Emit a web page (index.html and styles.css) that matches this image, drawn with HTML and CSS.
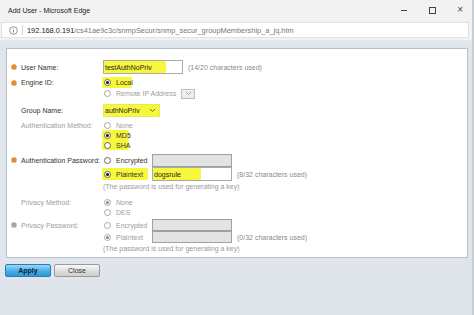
FILE: index.html
```html
<!DOCTYPE html>
<html>
<head>
<meta charset="utf-8">
<link rel="stylesheet" href="styles.css">
</head>
<body>
<div class="window">
  <div class="titlebar">
    <span class="title">Add User - Microsoft Edge</span>
    <div class="winctl">
      <span class="wmin"></span>
      <span class="wmax"></span>
      <span class="wclose">×</span>
    </div>
  </div>
  <div class="addr">
    <div class="addrbox">
      <svg class="info" width="9" height="9" viewBox="0 0 9 9"><circle cx="4.5" cy="4.5" r="3.8" fill="none" stroke="#777" stroke-width="0.8"/><line x1="4.5" y1="4" x2="4.5" y2="6.6" stroke="#777" stroke-width="0.8"/><circle cx="4.5" cy="2.7" r="0.5" fill="#777"/></svg>
      <span class="sep"></span>
      <span class="url"><span class="host">192.168.0.191</span>/cs41ae9c3c/snmpSecur/snmp_secur_groupMembership_a_jq.htm</span>
    </div>
  </div>
  <div class="content">
    <div class="panel">
      <div class="field f-user">
        <div class="lbl"><span class="dot"></span>User Name:</div>
        <div class="opts">
          <div class="line l14">
            <span class="input w80"><span class="hl hl-user">testAuthNoPriv</span></span>
            <span class="count">(14/20 characters used)</span>
          </div>
        </div>
      </div>
      <div class="field f-engine">
        <div class="lbl l11"><span class="dot"></span>Engine ID:</div>
        <div class="opts">
          <div class="line l11"><span class="hlr hl-local"><span class="radio on"></span><span class="rt">Local</span></span></div>
          <div class="line l11 dis"><span class="radio dis"></span><span class="rt">Remote IP Address</span><span class="minisel"><svg width="7" height="5" viewBox="0 0 7 5"><polyline points="1,1 3.5,3.5 6,1" fill="none" stroke="#999" stroke-width="0.9"/></svg></span></div>
        </div>
      </div>
      <div class="field f-group">
        <div class="lbl l14"><span class="nodot"></span>Group Name:</div>
        <div class="opts">
          <div class="line l14"><span class="select hl-sel">authNoPriv<svg width="7" height="5" viewBox="0 0 7 5"><polyline points="1,1 3.5,3.5 6,1" fill="none" stroke="#555" stroke-width="0.9"/></svg></span></div>
        </div>
      </div>
      <div class="field f-method">
        <div class="lbl l10 dis"><span class="nodot"></span>Authentication Method:</div>
        <div class="opts">
          <div class="line l10 dis"><span class="radio dis"></span><span class="rt">None</span></div>
          <div class="line l10"><span class="hlr hl-md5"><span class="radio on"></span><span class="rt">MD5</span></span></div>
          <div class="line l10"><span class="hlr hl-sha"><span class="radio"></span><span class="rt">SHA</span></span></div>
        </div>
      </div>
      <div class="field f-apwd">
        <div class="lbl l14"><span class="dot"></span>Authentication Password:</div>
        <div class="opts">
          <div class="line l14"><span class="radio"></span><span class="rt rw">Encrypted</span><span class="input w80 disin"></span></div>
          <div class="line l14"><span class="hlr hl-plain"><span class="radio on"></span><span class="rt">Plaintext</span></span><span class="input w80 after-hl"><span class="hl hl-dogs">dogsrule</span></span><span class="count">(8/32 characters used)</span></div>
          <div class="line l10 hint">(The password is used for generating a key)</div>
        </div>
      </div>
      <div class="field f-pmethod">
        <div class="lbl l10 dis"><span class="nodot"></span>Privacy Method:</div>
        <div class="opts">
          <div class="line l10 dis"><span class="radio dis on"></span><span class="rt">None</span></div>
          <div class="line l10 dis"><span class="radio dis"></span><span class="rt">DES</span></div>
        </div>
      </div>
      <div class="field f-ppwd">
        <div class="lbl l12 dis"><span class="dot gray"></span>Privacy Password:</div>
        <div class="opts">
          <div class="line l12 dis"><span class="radio dis"></span><span class="rt rw">Encrypted</span><span class="input w80 disin"></span></div>
          <div class="line l12 dis"><span class="radio dis on"></span><span class="rt rw">Plaintext</span><span class="input w80 disin"></span><span class="count">(0/32 characters used)</span></div>
          <div class="line l10 hint">(The password is used for generating a key)</div>
        </div>
      </div>
    </div>
    <div class="buttons">
      <span class="btn apply">Apply</span>
      <span class="btn closeb">Close</span>
    </div>
  </div>
</div>
</body>
</html>
```

FILE: styles.css
```css
* { box-sizing: border-box; }
html, body { margin: 0; padding: 0; }
body {
  width: 474px;
  height: 315px;
  overflow: hidden;
  font-family: "Liberation Sans", Arial, sans-serif;
  background: #dfe5eb;
}
.window {
  width: 474px;
  height: 315px;
  display: flex;
  flex-direction: column;
  background: #dfe5eb;
  border-right: 2px solid #c9ced3;
}
.titlebar {
  height: 20px;
  background: #f2f2f2;
  display: flex;
  align-items: center;
  justify-content: space-between;
  padding-left: 8px;
}
.title {
  font-size: 7px;
  color: #222;
}
.winctl {
  display: flex;
  align-items: center;
  height: 20px;
}
.wmin {
  width: 6px;
  height: 1px;
  background: #444;
  margin-right: 22px;
}
.wmax {
  width: 7px;
  height: 7px;
  border: 1px solid #444;
  margin-right: 21px;
}
.wclose {
  font-size: 10px;
  color: #444;
  margin-right: 9px;
  line-height: 10px;
}
.addr {
  height: 20px;
  background: #f2f2f2;
  padding: 2px 3px 2px 1px;
}
.addrbox {
  height: 16px;
  background: #fff;
  border: 1px solid #e2e2e2;
  display: flex;
  align-items: center;
  padding-left: 7px;
}
.info { display: block; }
.sep {
  width: 1px;
  height: 10px;
  background: #d0d0d0;
  margin: 0 4px 0 4px;
}
.url {
  font-size: 7.4px;
  color: #777;
  white-space: nowrap;
}
.host { color: #222; }
.content {
  flex: 1;
  padding: 7px 4px 0 6px;
  border-top: 1px solid #e6e9ec;
}
.panel {
  width: 462px;
  background: #fff;
  border: 1px solid #b7c0c8;
  padding: 11px 0 4px 5px;
}
.field {
  display: flex;
  font-size: 7px;
  color: #333;
}
.f-engine { margin-top: 3px; }
.f-group { margin-top: 4px; }
.f-method { margin-top: 3px; }
.f-apwd { margin-top: 3px; }
.f-pmethod { margin-top: 6px; }
.f-ppwd { margin-top: 2px; }
.lbl {
  width: 91px;
  height: 14px;
  display: flex;
  align-items: center;
  white-space: nowrap;
}
.lbl.l11 { height: 11px; }
.lbl.l10 { height: 10px; }
.lbl.l12 { height: 12px; }
.dot {
  width: 4px;
  height: 4px;
  border-radius: 1px;
  background: #ea8a2e;
  box-shadow: 0 0 0 0.5px #d0701a;
  margin-right: 5px;
  flex: none;
}
.dot.gray { background: #a8a8a8; box-shadow: 0 0 0 0.5px #909090; }
.nodot { width: 4px; margin-right: 5px; flex: none; }
.dis { color: #9d9d9d; }
.opts {
  display: flex;
  flex-direction: column;
}
.line {
  display: flex;
  align-items: center;
  white-space: nowrap;
}
.l14 { height: 14px; }
.l12 { height: 12px; }
.l11 { height: 11px; }
.l10 { height: 10px; }
.hint { color: #9a9a9a; }
.radio {
  width: 7px;
  height: 7px;
  border-radius: 50%;
  border: 1px solid #666;
  background: #fff;
  margin-left: 1px;
  flex: none;
  display: flex;
  align-items: center;
  justify-content: center;
}
.radio.on::after {
  content: "";
  width: 3px;
  height: 3px;
  border-radius: 50%;
  background: #111;
}
.radio.dis { border-color: #aaa; }
.radio.dis.on::after { background: #888; }
.rt { margin-left: 5px; }
.rw { width: 36px; }
.hlr {
  display: flex;
  align-items: center;
  background: #f7f73c;
  height: 10px;
  border-radius: 2px;
  margin-left: -1px;
  padding-left: 1px;
}
.hl-local { width: 30px; height: 11px; }
.hl-md5 { width: 27px; }
.hl-sha { width: 27px; }
.hl-plain { width: 46px; height: 12px; }
.after-hl { margin-left: 4px; }
.input {
  height: 14px;
  border: 1px solid #a9a9a9;
  background: #fff;
  display: flex;
  align-items: center;
  flex: none;
}
.w80 { width: 80px; }
.disin { background: #e3e3e3; border-color: #a0a0a0; height: 13px; }
.l12 .disin { height: 12px; }
.hl {
  background: #f7f73c;
  height: 12px;
  display: flex;
  align-items: center;
  border-radius: 2px;
  padding-left: 1px;
  color: #222;
}
.hl-user { width: 62px; }
.hl-dogs { width: 48px; }
.count {
  color: #8a8a8a;
  margin-left: 5px;
}
.minisel {
  width: 14px;
  height: 10px;
  border: 1px solid #bdbdbd;
  background: #eee;
  margin-left: 5px;
  display: flex;
  align-items: center;
  justify-content: center;
}
.minisel svg, .select svg { display: block; }
.select {
  width: 57px;
  height: 13px;
  background: #f7f73c;
  border: 1px solid #e8e860;
  display: flex;
  align-items: center;
  justify-content: space-between;
  padding: 0 3px 0 1px;
  color: #222;
}
.buttons {
  display: flex;
  gap: 3px;
  margin-top: 6px;
  margin-left: -1px;
}
.btn {
  width: 46px;
  height: 13px;
  border-radius: 2px;
  font-size: 7px;
  display: flex;
  align-items: center;
  justify-content: center;
  color: #222;
}
.apply {
  background: linear-gradient(#9ad6f7, #45ade8 55%, #2f97d6);
  border: 1px solid #2a7db8;
  font-weight: bold;
  color: #123;
}
.closeb {
  background: linear-gradient(#f8f8f8, #dedede 55%, #cfcfcf);
  border: 1px solid #9a9a9a;
  color: #333;
}
```
